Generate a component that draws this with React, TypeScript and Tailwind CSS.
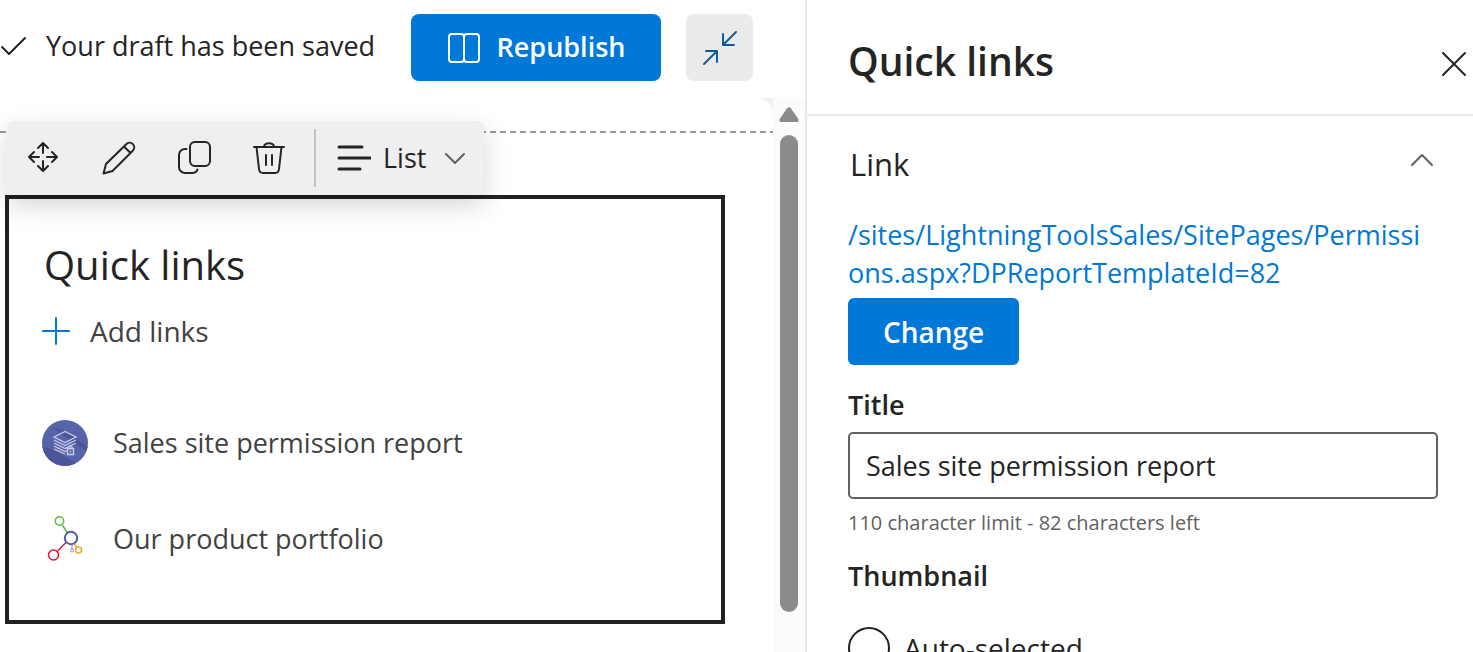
import type { ReactNode } from "react";
import { clsx } from "clsx";

interface IconProps {
  className?: string;
  children: ReactNode;
  size?: number;
  strokeWidth?: number;
}

function Icon({ className, children, size = 34, strokeWidth = 2 }: IconProps) {
  return (
    <svg
      width={size}
      height={size}
      viewBox={`0 0 ${size} ${size}`}
      fill="none"
      stroke="currentColor"
      strokeWidth={strokeWidth}
      strokeLinecap="round"
      strokeLinejoin="round"
      className={clsx("shrink-0", className)}
      aria-hidden="true"
    >
      {children}
    </svg>
  );
}

function MoveIcon() {
  return (
    <Icon>
      <path d="M16 12V2M11 7l5-5 5 5M16 20v10M11 25l5 5 5-5M12 16H2M7 11l-5 5 5 5M20 16h10M25 11l5 5-5 5" />
    </Icon>
  );
}

function PencilIcon() {
  return (
    <Icon>
      <path d="M1.500 32.500 4 23 24.500 3a4.600 4.600 0 0 1 6.500 6.500L10.500 30ZM22 5.500l6.500 6.500" />
    </Icon>
  );
}

function CopyIcon() {
  return (
    <Icon>
      <rect x="13" y="1" width="20" height="24" rx="5" />
      <path d="M9.500 8H8a6 6 0 0 0-6 6v12a6 6 0 0 0 6 6h8a5 5 0 0 0 4.500-3.500" />
    </Icon>
  );
}

function TrashIcon() {
  return (
    <Icon>
      <path d="M2 6h30M12 6c0-5 10-5 10 0M4.500 6l2.500 22c.3 2.600 1.600 4 4 4h12c2.400 0 3.700-1.400 4-4l2.500-22M14 14v10M20 14v10" />
    </Icon>
  );
}

function ReportLogo() {
  return (
    <svg width="46" height="46" viewBox="0 0 46 46" className="shrink-0" aria-hidden="true">
      <clipPath id="disc">
        <circle cx="23" cy="23" r="23" />
      </clipPath>
      <g clipPath="url(#disc)">
        <path fill="#5864aa" d="M0 0h46v46H0z" />
        <path fill="#4c5597" d="M0 26 12 30 34 43 30 46H0zM10 7l13 4 23 16v5L33 24z" />
      </g>
      <g fill="none" stroke="#c9cdea" strokeWidth="1.300">
        <path d="m12 17 11-5.500L34 17l-11 5.500z" />
        <path d="m12 20 11 5.500L34 20M12 23l11 5.500L34 23M12 26l11 5.500 2-1M12 29l11 5" />
        <path d="M25.500 28.500h6v6h-6zM27 28.500V27a1.600 1.600 0 0 1 3 0v1.500M28.500 30.500v2" />
      </g>
    </svg>
  );
}

function PortfolioLogo() {
  return (
    <svg width="46" height="46" viewBox="0 0 46 46" fill="none" strokeWidth="1.500" className="shrink-0" aria-hidden="true">
      <g stroke="#5cbf3a">
        <circle cx="17.500" cy="5" r="4.200" />
        <path d="m20 8.500 5.500 8.500" />
      </g>
      <g stroke="#e5142d">
        <circle cx="11.500" cy="39" r="5" />
        <path d="m15 35.500 9.500-9.500" />
      </g>
      <g stroke="#f5a623">
        <circle cx="36.500" cy="34" r="3" />
        <path d="m32.500 28 2.500 3.500" />
      </g>
      <g stroke="#a779bd" strokeWidth="1">
        <circle cx="30" cy="34.500" r="1.500" />
        <path d="M30 28.500V33" />
      </g>
      <circle cx="29" cy="22" r="6.200" stroke="#4f5ba8" strokeWidth="2" />
    </svg>
  );
}

const tools = [
  { label: "Move web part", icon: <MoveIcon /> },
  { label: "Edit web part", icon: <PencilIcon /> },
  { label: "Duplicate web part", icon: <CopyIcon /> },
  { label: "Delete web part", icon: <TrashIcon /> },
];

const links = [
  { title: "Sales site permission report", logo: <ReportLogo /> },
  { title: "Our product portfolio", logo: <PortfolioLogo /> },
];

function CommandBar() {
  return (
    <header className="flex h-[98px] shrink-0 items-start pt-3.5">
      <div className="flex h-16 flex-1 items-center text-[27px] whitespace-nowrap">
        <Icon size={28} className="mr-[18px]">
          <path d="m2 15 7 7L25 6" />
        </Icon>
        <span>Your draft has been saved</span>
      </div>
      <button className="flex h-[67px] w-[250px] items-center justify-center gap-4 rounded-lg bg-[#0078d7] text-[27px] font-semibold text-white">
        <Icon>
          <rect x="2" y="3" width="15" height="28" rx="3" />
          <rect x="17" y="3" width="15" height="28" rx="3" />
        </Icon>
        Republish
      </button>
      <button
        aria-label="Collapse"
        className="mr-[52px] ml-[25px] flex size-[67px] items-center justify-center rounded-lg bg-[#ebebeb] text-[#0f5c9c]"
      >
        <Icon>
          <path d="M33 1 20 14M20 3v11h11M1 33l13-13M3 20h11v11" />
        </Icon>
      </button>
    </header>
  );
}

function WebPartToolbar() {
  return (
    <div
      role="toolbar"
      aria-label="Web part"
      className="absolute bottom-full -left-0.5 z-10 mb-1 flex h-[74px] w-[477px] items-center rounded-t-md rounded-br-md bg-[#efefef] pl-5 shadow-[0_10px_26px_rgba(0,0,0,0.17)]"
    >
      <div className="flex gap-[41px]">
        {tools.map((tool) => (
          <button key={tool.label} aria-label={tool.label}>
            {tool.icon}
          </button>
        ))}
      </div>
      <div className="mr-[21px] ml-7 h-[58px] w-0.5 bg-[#c4c4c4]" />
      <button className="flex items-center text-[27px]">
        <Icon strokeWidth={3} className="mr-3">
          <path d="M2 6h23M2 17h31M2 28h21" />
        </Icon>
        List
        <Icon size={22} className="ml-[18px] text-[#616161]">
          <path d="m2 7 9 9 9-9" />
        </Icon>
      </button>
    </div>
  );
}

function QuickLinksWebPart() {
  return (
    <section className="relative mr-12 ml-[5px] h-[429px] border-4 border-[#212121] pt-[34px] pl-[33px]">
      <WebPartToolbar />
      <h2 className="pl-0.5 text-[40px] leading-[64px]">Quick links</h2>
      <button className="mt-[10px] flex h-12 items-center gap-5 text-[28px] text-[#424242]">
        <Icon size={28} className="text-[#0078d7]">
          <path d="M14 1v26M1 14h26" />
        </Icon>
        Add links
      </button>
      <ul className="mt-[65px] flex flex-col gap-[50px] text-[27px] text-[#424242]">
        {links.map((link) => (
          <li key={link.title}>
            <a href="#" className="flex h-[46px] items-center gap-[25px]">
              {link.logo}
              {link.title}
            </a>
          </li>
        ))}
      </ul>
    </section>
  );
}

function ScrollTrack() {
  return (
    <div className="flex w-8 shrink-0 flex-col items-center bg-[#fbfbfb] pt-[9px] pb-10" aria-hidden="true">
      <svg width="20" height="15" viewBox="0 0 20 15" className="mb-[13px] shrink-0">
        <path d="M8 1.500q2-2.500 4 0l7 10q1.500 3.500-1 3.500H2q-2.500 0-1-3.500z" fill="#8b8b8b" />
      </svg>
      <div className="w-[18px] flex-1 rounded-full bg-[#8b8b8b]" />
    </div>
  );
}

function PropertyPane() {
  return (
    <aside className="w-[668px] shrink-0 border-l-2 border-[#e8e8e8]">
      <div className="flex h-[116px] items-center justify-between border-b-2 border-[#eaeaea] pt-2 pr-1.5 pl-[41px]">
        <h2 className="text-[39px] font-semibold">Quick links</h2>
        <button aria-label="Close" className="mt-1.5">
          <Icon size={26}>
            <path d="m2 2 22 22M24 2 2 24" />
          </Icon>
        </button>
      </div>
      <div className="pr-[35px] pl-[41px]">
        <button className="flex h-24 w-full items-center justify-between pr-1 pl-0.5 text-[31px]" aria-expanded="true">
          <span>Link</span>
          <Icon size={24} className="-mt-2 text-[#616161]">
            <path d="m2 17 10-10 10 10" />
          </Icon>
        </button>
        <a href="#" className="mt-1 block pr-2 text-[27px] leading-[38px] break-all text-[#0078d7]">
          /sites/LightningToolsSales/SitePages/Permissions.aspx?DPReportTemplateId=82
        </a>
        <button className="mt-1.5 block h-[67px] w-[171px] rounded-md bg-[#0078d7] text-[28px] font-semibold text-white">
          Change
        </button>
        <label htmlFor="link-title" className="mt-5 block text-[27px] leading-10 font-semibold">
          Title
        </label>
        <input
          id="link-title"
          defaultValue="Sales site permission report"
          className="mt-[7px] block h-[67px] w-full rounded-[5px] border-2 border-[#616161] px-4 text-[27px]"
        />
        <p className="mt-2 text-xl leading-8 text-[#616161]">110 character limit - 82 characters left</p>
        <fieldset className="mt-[17px]">
          <legend className="text-[27px] leading-10 font-semibold">Thumbnail</legend>
          <label className="mt-[31px] flex items-center gap-3.5 text-[28px] leading-[42px]">
            <input
              type="radio"
              name="thumbnail"
              className="size-[42px] shrink-0 appearance-none rounded-full border-2 border-[#212121] checked:bg-[#0078d7]"
            />
            Auto-selected
          </label>
        </fieldset>
      </div>
    </aside>
  );
}

export default function App() {
  return (
    <div className="flex h-screen overflow-hidden bg-white font-['Open_Sans','Noto_Sans',sans-serif] text-[#242424]">
      <main className="flex min-w-0 flex-1 flex-col">
        <CommandBar />
        <div className="flex min-h-0 flex-1">
          <div className="min-w-0 flex-1 bg-[#efefef]">
            <div className="h-full rounded-tr-2xl bg-white pt-[33px]">
              <div className="mb-[62px] h-0.5 bg-[repeating-linear-gradient(90deg,#999_0_6px,transparent_6px_10px)]" />
              <QuickLinksWebPart />
            </div>
          </div>
          <ScrollTrack />
        </div>
      </main>
      <PropertyPane />
    </div>
  );
}
